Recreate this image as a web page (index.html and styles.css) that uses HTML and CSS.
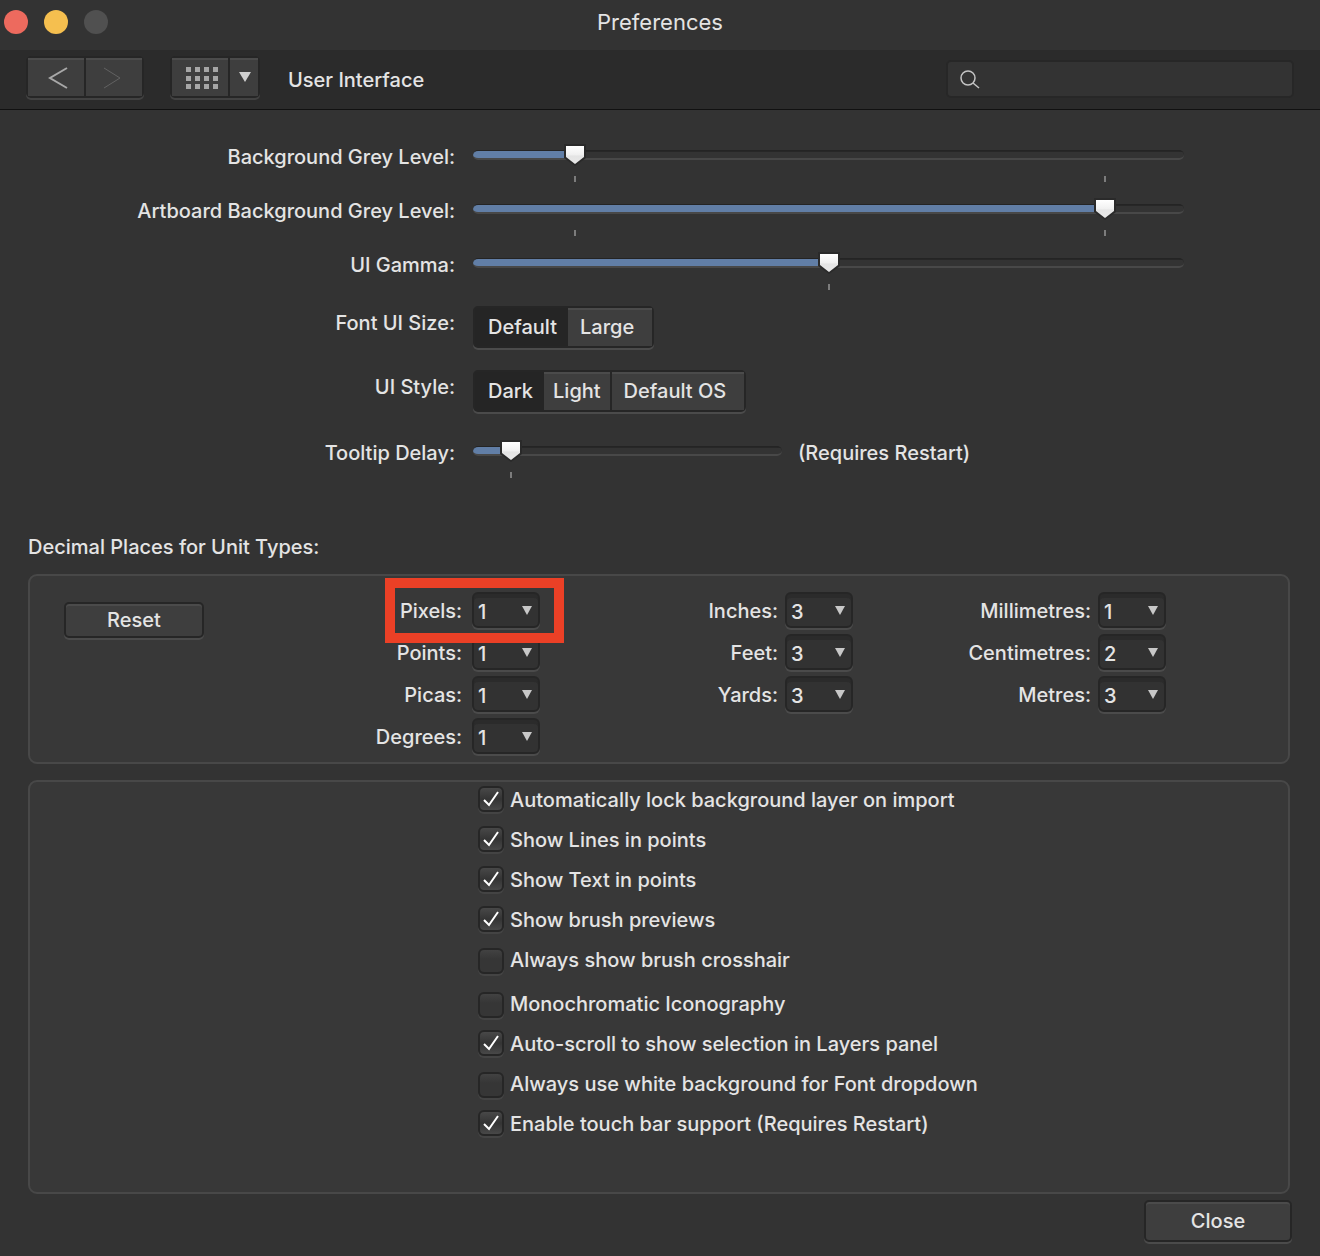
FILE: index.html
```html
<!DOCTYPE html>
<html lang="en">
<head>
<meta charset="utf-8">
<meta name="viewport" content="width=device-width, initial-scale=1">
<title>Preferences</title>
<link rel="stylesheet" href="styles.css">
</head>
<body>
<div class="window">
  <header class="titlebar">
    <div class="lights">
      <button class="light light-close" aria-label="Close window"></button>
      <button class="light light-minimise" aria-label="Minimise window"></button>
      <button class="light" aria-label="Zoom window" disabled></button>
    </div>
    <h1 class="title">Preferences</h1>
  </header>

  <nav class="toolbar">
    <div class="tool-group">
      <button class="tool" aria-label="Back">
        <svg width="24" height="26" viewBox="0 0 24 26" fill="none" stroke="#a8a8a8" stroke-width="2"><path d="M23 4 6 14l17 10"/></svg>
      </button>
      <button class="tool" aria-label="Forward" disabled>
        <svg width="20" height="26" viewBox="0 0 20 26" fill="none" stroke="#626262" stroke-width="1"><path d="M0 4l16 10L0 24"/></svg>
      </button>
    </div>
    <div class="tool-group">
      <button class="tool" aria-label="Show all">
        <svg width="36" height="26" viewBox="-4 -2 36 26" fill="#a6a6a6"><path d="M0 1h5v5H0zM9 1h5v5H9zM18 1h5v5h-5zM27 1h5v5h-5zM0 10h5v5H0zM9 10h5v5H9zM18 10h5v5h-5zM27 10h5v5h-5zM0 18h5v5H0zM9 18h5v5H9zM18 18h5v5h-5zM27 18h5v5h-5z"/></svg>
      </button>
      <button class="tool tool-narrow" aria-label="Choose a page">
        <svg width="14" height="10" viewBox="-2 0 14 10" fill="#cfcfcf"><path d="M0 0h12L6 10z"/></svg>
      </button>
    </div>
    <h2 class="page-name">User Interface</h2>
    <label class="search">
      <svg width="20" height="20" viewBox="0 0 20 20" fill="none" stroke="#c4c4c4" stroke-width="1.5"><circle cx="8" cy="9" r="7"/><path d="m13 14 6 5"/></svg>
      <input type="search" aria-label="Search preferences">
    </label>
  </nav>

  <main>
    <form class="settings">
      <div class="setting slider-row">
        <label for="grey">Background Grey Level:</label>
        <div class="slider" style="--v:.132">
          <input id="grey" type="range" min="0" max="1000" value="132">
          <i class="tick" style="--at:.132"></i><i class="tick" style="--at:.901"></i>
        </div>
      </div>
      <div class="setting slider-row">
        <label for="artboard">Artboard Background Grey Level:</label>
        <div class="slider" style="--v:.901">
          <input id="artboard" type="range" min="0" max="1000" value="901">
          <i class="tick" style="--at:.132"></i><i class="tick" style="--at:.901"></i>
        </div>
      </div>
      <div class="setting slider-row">
        <label for="gamma">UI Gamma:</label>
        <div class="slider" style="--v:.501">
          <input id="gamma" type="range" min="0" max="1000" value="501">
          <i class="tick" style="--at:.501"></i>
        </div>
      </div>
      <div class="setting choice-row">
        <span class="name" id="size-label">Font UI Size:</span>
        <div class="segments" role="group" aria-labelledby="size-label">
          <button type="button" class="segment" aria-pressed="true">Default</button>
          <button type="button" class="segment wide-end" aria-pressed="false">Large</button>
        </div>
      </div>
      <div class="setting choice-row">
        <span class="name" id="style-label">UI Style:</span>
        <div class="segments" role="group" aria-labelledby="style-label">
          <button type="button" class="segment" aria-pressed="true">Dark</button>
          <button type="button" class="segment" aria-pressed="false">Light</button>
          <button type="button" class="segment wide-end" aria-pressed="false">Default OS</button>
        </div>
      </div>
      <div class="setting slider-row">
        <label for="tooltip">Tooltip Delay:</label>
        <div class="with-note">
          <div class="slider" style="--v:.094">
            <input id="tooltip" type="range" min="0" max="1000" value="94">
            <i class="tick" style="--at:.094"></i>
          </div>
          <span>(Requires Restart)</span>
        </div>
      </div>
    </form>

    <h3 class="section-title">Decimal Places for Unit Types:</h3>
    <section class="panel units">
      <button class="button reset">Reset</button>
      <div class="unit-column">
        <div class="unit highlighted"><label for="px">Pixels:</label><select id="px"><option>1</option></select></div>
        <div class="unit"><label for="pt">Points:</label><select id="pt"><option>1</option></select></div>
        <div class="unit"><label for="pc">Picas:</label><select id="pc"><option>1</option></select></div>
        <div class="unit"><label for="deg">Degrees:</label><select id="deg"><option>1</option></select></div>
      </div>
      <div class="unit-column tight">
        <div class="unit"><label for="in">Inches:</label><select id="in"><option>3</option></select></div>
        <div class="unit"><label for="ft">Feet:</label><select id="ft"><option>3</option></select></div>
        <div class="unit"><label for="yd">Yards:</label><select id="yd"><option>3</option></select></div>
      </div>
      <div class="unit-column tight">
        <div class="unit"><label for="mm">Millimetres:</label><select id="mm"><option>1</option></select></div>
        <div class="unit"><label for="cm">Centimetres:</label><select id="cm"><option>2</option></select></div>
        <div class="unit"><label for="m">Metres:</label><select id="m"><option>3</option></select></div>
      </div>
    </section>

    <section class="panel options">
      <div class="option-group">
        <label class="check"><input type="checkbox" checked>Automatically lock background layer on import</label>
        <label class="check"><input type="checkbox" checked>Show Lines in points</label>
        <label class="check"><input type="checkbox" checked>Show Text in points</label>
        <label class="check"><input type="checkbox" checked>Show brush previews</label>
        <label class="check"><input type="checkbox">Always show brush crosshair</label>
      </div>
      <div class="option-group">
        <label class="check"><input type="checkbox">Monochromatic Iconography</label>
        <label class="check"><input type="checkbox" checked>Auto-scroll to show selection in Layers panel</label>
        <label class="check"><input type="checkbox">Always use white background for Font dropdown</label>
        <label class="check"><input type="checkbox" checked>Enable touch bar support (Requires Restart)</label>
      </div>
    </section>
  </main>

  <footer class="footer">
    <button class="button close">Close</button>
  </footer>
</div>
</body>
</html>
```
FILE: styles.css
```css
:root {
  --bg: #333333;
  --edge: #262626;
  --face: #3e3e3e;
  --shine: #4b4b4b;
  --text: #e4e4e4;
}

*, *::after { box-sizing: border-box; }

body {
  margin: 0;
  background: var(--bg);
  color: var(--text);
  font: 500 20px/24px Inter, "Liberation Sans", sans-serif;
}

button, input, select { font: inherit; color: inherit; }
button { margin: 0; padding: 0; border: 0; }
h1, h2, h3 { margin: 0; font: inherit; }

/* Title bar */
.titlebar {
  display: grid;
  grid-template-columns: 1fr auto 1fr;
  align-items: center;
  height: 50px;
  padding: 0 4px 6px;
}
.title { font-size: 22px; font-weight: 400; }
.lights { display: flex; gap: 16px; }
.light { width: 24px; height: 24px; border-radius: 50%; background: #505050; }
.light-close { background: #ed6a5e; }
.light-minimise { background: #f5bf4f; }

/* Toolbar */
.toolbar {
  display: flex;
  align-items: flex-end;
  padding: 6px 26px 11px;
  background: #2b2b2b;
  border-bottom: 1px solid #111;
}
.tool-group {
  display: flex;
  gap: 2px;
  height: 42px;
  margin-right: 26px;
  border: 2px solid var(--edge);
  border-radius: 5px;
  background: var(--edge);
  box-shadow: 0 2px 0 #424242;
}
.tool {
  display: grid;
  place-items: center;
  width: 56px;
  background: var(--face);
  box-shadow: inset 0 2px 0 var(--shine);
}
.tool-narrow { width: 28px; }
.page-name { padding: 0 2px; line-height: 36px; }
.search {
  display: flex;
  align-items: center;
  gap: 8px;
  width: 348px;
  height: 38px;
  margin-left: auto;
  padding: 0 12px;
  border: 2px solid #272727;
  border-radius: 5px;
  background: var(--bg);
}
.search input {
  flex: 1;
  min-width: 0;
  padding: 0;
  border: 0;
  outline: 0;
  background: none;
}

/* Slider and choice rows */
.settings { padding: 20px 136px 0 0; }
.setting {
  display: grid;
  grid-template-columns: 455px 1fr;
  column-gap: 18px;
  text-align: right;
}
.slider-row { height: 54px; align-items: center; }
.choice-row { margin-top: 14px; align-items: start; }
.choice-row + .choice-row { margin-top: 22px; }
.choice-row + .slider-row { margin-top: 14px; }
.name { line-height: 34px; }

.slider { position: relative; padding: 14px 0 18px; }
.slider input {
  display: block;
  appearance: none;
  width: 100%;
  height: 22px;
  margin: 0;
  background: none;
}
.slider input::-webkit-slider-runnable-track {
  height: 10px;
  border-radius: 5px;
  border-top: 1px solid #242424;
  border-bottom: 2px solid #484848;
  background:
    linear-gradient(#617ea6, #617ea6) 0 0 / calc(11px + var(--v) * (100% - 22px)) 100% no-repeat,
    linear-gradient(#272727 1px, #333 1px);
}
.slider input::-webkit-slider-thumb {
  appearance: none;
  width: 22px;
  height: 22px;
  margin-top: -7px;
  background: url("data:image/svg+xml,%3Csvg xmlns='http://www.w3.org/2000/svg' width='22' height='22'%3E%3ClinearGradient id='g' x2='0' y2='1'%3E%3Cstop stop-color='%23fff'/%3E%3Cstop offset='.5' stop-color='%23f0f0f0'/%3E%3Cstop offset='.55' stop-color='%23e4e4e4'/%3E%3Cstop offset='1' stop-color='%23e8e8e8'/%3E%3C/linearGradient%3E%3Cpath d='M0 0h22v14l-11 8L0 14z' fill='%232a2a2a'/%3E%3Cpath d='M2 2h18v11l-9 7-9-7z' fill='url(%23g)'/%3E%3C/svg%3E");
}
.tick {
  position: absolute;
  top: 46px;
  left: calc(10px + var(--at) * (100% - 22px));
  width: 2px;
  height: 6px;
  background: #7c7c7c;
}
.with-note { display: flex; align-items: center; gap: 16px; }
.with-note .slider { width: 309px; }

.segments {
  display: flex;
  justify-self: start;
  height: 42px;
  border: 2px solid var(--edge);
  border-radius: 5px;
  background: var(--edge);
  box-shadow: 0 2px 0 var(--shine);
}
.segment {
  padding: 0 9px;
  background: var(--face);
  box-shadow: inset 0 2px 0 var(--shine);
}
.segment + .segment + .segment { margin-left: 2px; }
.segment[aria-pressed="true"] { padding: 0 11px 0 13px; background: #252525; box-shadow: none; }
.segment.wide-end { padding: 0 18px 0 12px; }

/* Panels */
.section-title { padding: 55px 28px 15px; }
.panel {
  margin: 0 30px 16px 28px;
  border: 2px solid #484848;
  border-radius: 9px;
  background: #383838;
}
.button {
  border: 2px solid var(--edge);
  border-radius: 5px;
  background: var(--face);
  box-shadow: inset 0 2px 0 var(--shine), 0 2px 0 var(--shine);
}
.units {
  display: grid;
  grid-template-columns: 1fr repeat(3, 28.4%);
  min-height: 190px;
  padding: 16px 122px 8px 34px;
}
.reset { width: 140px; height: 36px; margin-top: 10px; }
.unit-column { display: grid; align-content: start; gap: 6px; }
.unit {
  display: flex;
  justify-content: flex-end;
  align-items: center;
  gap: 10px;
  position: relative;
}
.tight .unit { gap: 7px; }
.unit label { padding-top: 2px; }
.unit select {
  appearance: none;
  width: 68px;
  height: 36px;
  padding: 3px 4px 0;
  border: 2px solid var(--edge);
  border-radius: 6px;
  background: #323232 url("data:image/svg+xml,%3Csvg xmlns='http://www.w3.org/2000/svg' width='10' height='9'%3E%3Cpath d='M0 0h10L5 9z' fill='%23c8c8c8'/%3E%3C/svg%3E") no-repeat right 6px top 12px;
  box-shadow: inset 0 4px 0 #2b2b2b, 0 2px 0 var(--shine);
}
.highlighted::after {
  content: "";
  position: absolute;
  z-index: 1;
  inset: -14px -24px -15px auto;
  width: 179px;
  border: 10px solid #eb4026;
  pointer-events: none;
}

.options { min-height: 414px; margin-bottom: 6px; padding-left: 448px; }
.option-group { display: grid; gap: 4px; }
.option-group + .option-group { margin-top: 8px; }
.check { display: flex; align-items: center; gap: 6px; height: 36px; }
.check input {
  appearance: none;
  flex: none;
  width: 26px;
  height: 26px;
  margin: 0 0 2px;
  border: 2px solid var(--edge);
  border-radius: 6px;
  background: linear-gradient(#424242, #363636 40%, #363636);
  box-shadow: 0 2px 0 #444;
}
.check input:not(:checked) { margin: 2px 0 0; }
.check input:checked {
  background:
    url("data:image/svg+xml,%3Csvg xmlns='http://www.w3.org/2000/svg' width='22' height='22'%3E%3Cpath d='M4 12l5 5 9-13' fill='none' stroke='%23fff' stroke-width='2'/%3E%3C/svg%3E") center no-repeat,
    linear-gradient(#484848, #343434 50%, #484848);
}

.footer { display: flex; justify-content: flex-end; padding: 0 28px 12px; }
.close { width: 148px; height: 42px; }
```
